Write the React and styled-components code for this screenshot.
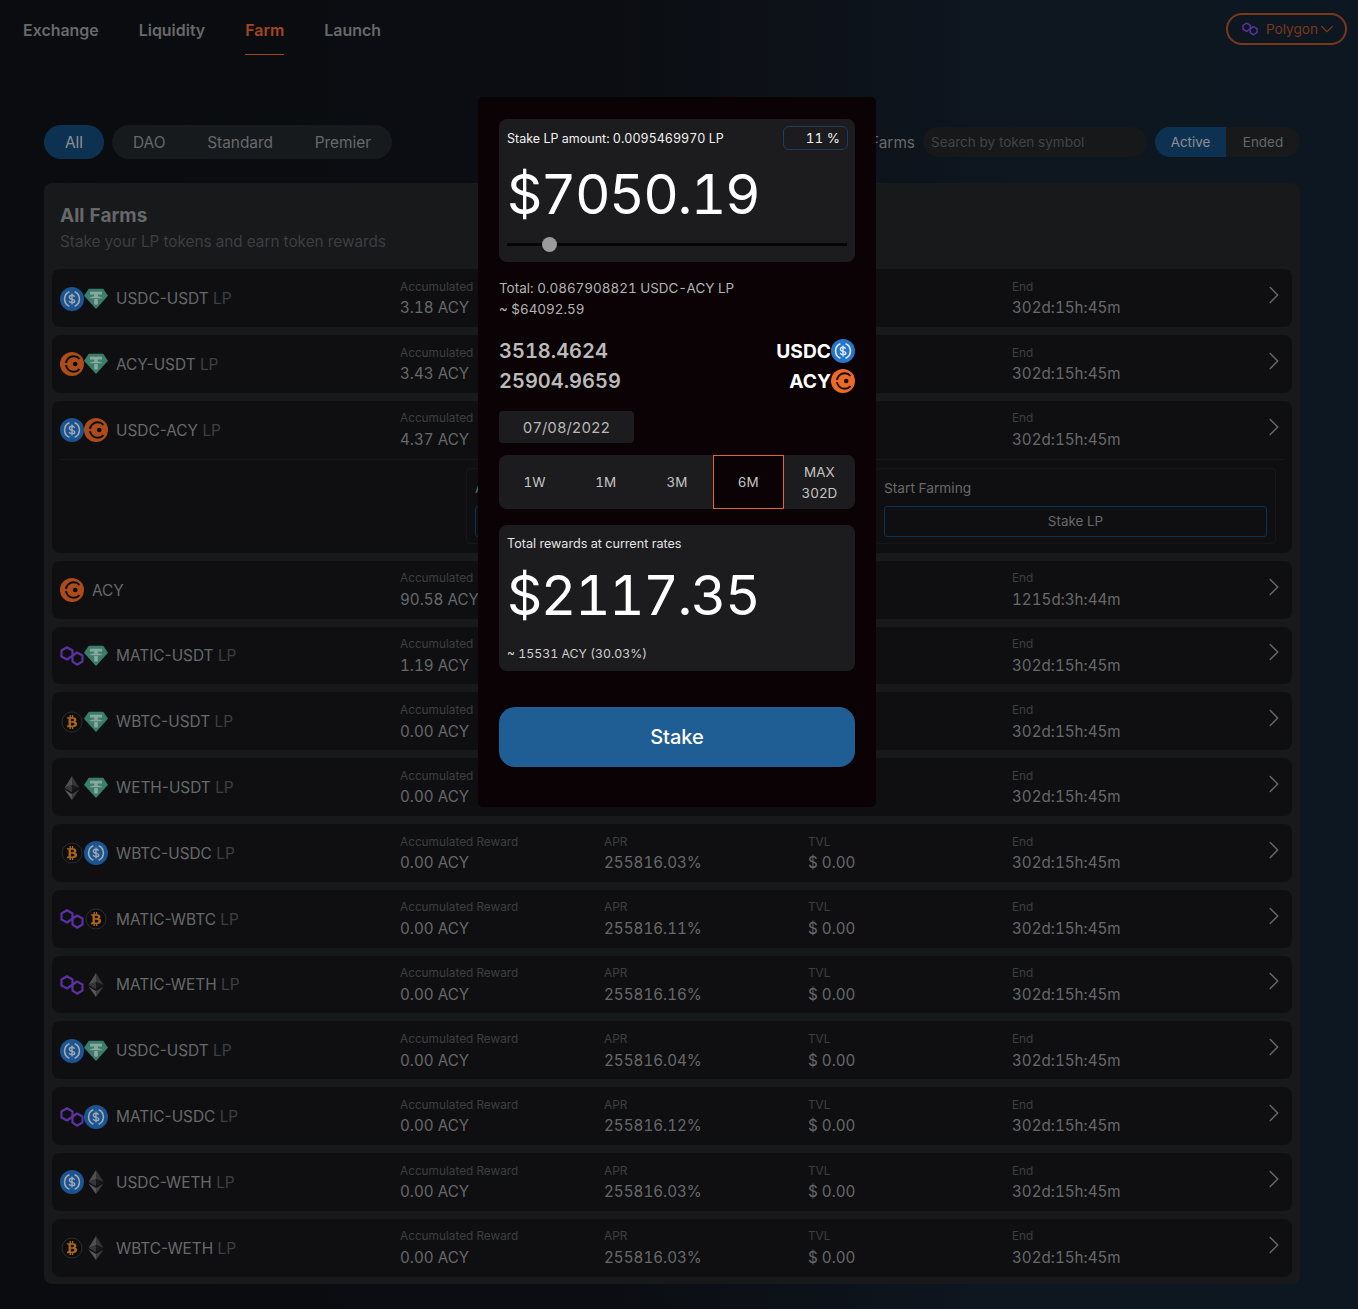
import React from "react";
import styled, { createGlobalStyle } from "styled-components";
import { ChevronDown, ChevronRight } from "lucide-react";
import { FaBtc } from "react-icons/fa";

const Global = createGlobalStyle`
  html, body { margin: 0; padding: 0; background: #0c0e12; }
  body { font-family: Inter, "Liberation Sans", sans-serif; font-variant-numeric: tabular-nums; }
  * { box-sizing: border-box; }
`;

const Page = styled.div`
  position: relative;
  width: 1358px;
  height: 1309px;
  overflow: hidden;
  background: linear-gradient(90deg, #0f1115 0%, #10131a 45%, #14202d 75%, #13202e 100%);
`;
const Nav = styled.header`
  display: flex;
  justify-content: space-between;
  align-items: flex-start;
  height: 125px;
  padding: 13px 11px 0 23px;
`;
const NavLinks = styled.nav`
  display: flex;
  gap: 40px;
`;
const NavLink = styled.a`
  display: block;
  height: 42px;
  padding-top: 8px;
  font-size: 15.95px;
  line-height: 20px;
  font-weight: 600;
  color: ${(p) => (p.$active ? "#e2602c" : "#8f9092")};
  border-bottom: ${(p) => (p.$active ? "1px solid #e2602c" : "none")};
`;
const Network = styled.button`
  display: flex;
  align-items: center;
  width: 121px;
  height: 32px;
  padding: 0 0 0 14px;
  border: 2px solid #a84e24;
  border-radius: 16px;
  background: transparent;
  font: 400 13.6px Inter, sans-serif;
  color: #a84e24;
  svg:first-child { margin-right: 8px; }
`;
const Filters = styled.div`
  display: flex;
  align-items: center;
  height: 34px;
  margin: 0 58px 24px 44px;
`;
const AllPill = styled.div`
  width: 60px;
  height: 34px;
  line-height: 35px;
  margin-right: 8px;
  border-radius: 17px;
  background: #134470;
  color: #c4c6c8;
  text-align: center;
  font-size: 15.4px;
`;
const PillGroup = styled.div`
  display: flex;
  justify-content: space-between;
  width: 280px;
  height: 34px;
  padding: 0 21px;
  border-radius: 17px;
  background: #212529;
  color: #8f9092;
  font-size: 15.4px;
  line-height: 35px;
`;
const FilterRight = styled.div`
  display: flex;
  align-items: center;
  height: 30px;
  margin-left: auto;
`;
const MyFarms = styled.span`
  margin-right: 8px;
  font-size: 15.4px;
  color: #8f9092;
`;
const Search = styled.input`
  width: 224px;
  height: 30px;
  margin-right: 8px;
  padding: 0 8px;
  border: none;
  border-radius: 15px;
  background: #202225;
  font: 400 13.5px Inter, sans-serif;
  &::placeholder { color: #5d5e60; opacity: 1; }
`;
const Toggle = styled.div`
  display: flex;
  height: 30px;
  border-radius: 15px;
  overflow: hidden;
  background: #212326;
`;
const ToggleItem = styled.div`
  width: ${(p) => (p.$active ? "71px" : "74px")};
  line-height: 30px;
  text-align: center;
  font-size: 13.44px;
  color: ${(p) => (p.$active ? "#c4c6c8" : "#8f9092")};
  background: ${(p) => (p.$active ? "#134470" : "transparent")};
`;
const Panel = styled.section`
  display: flex;
  flex-direction: column;
  gap: 8px;
  height: 1101px;
  margin: 0 58px 0 44px;
  padding: 19px 8px 8px;
  border-radius: 8px;
  background: #212326;
`;
const PanelHead = styled.div`
  height: 59.3px;
  padding: 0 8px;
  flex: none;
`;
const PanelTitle = styled.h2`
  margin: 0;
  font-size: 19px;
  line-height: 27px;
  font-weight: 700;
  color: #8f9092;
`;
const PanelSub = styled.p`
  margin: 1px 0 0;
  font-size: 15.3px;
  line-height: 24px;
  color: #55565a;
`;
const Row = styled.article`
  flex: none;
  min-height: 57.8px;
  padding: 0 8px;
  border-radius: 8px;
  background: #151618;
`;
const RowMain = styled.div`
  display: grid;
  grid-template-columns: 340px repeat(4, 204px) 1fr;
  align-items: center;
  height: 57.8px;
  padding-top: 0.8px;
`;
const NameCell = styled.div`
  display: flex;
  align-items: center;
  gap: 8px;
`;
const Icons = styled.div`
  display: flex;
  svg { display: block; }
`;
const Name = styled.span`
  font-size: 15.4px;
  font-variant-numeric: normal;
  color: #8f9092;
`;
const Lp = styled.span`
  color: #55565a;
`;
const Metric = styled.div`
  white-space: nowrap;
  visibility: ${(p) => (p.$covered ? "hidden" : "visible")};
`;
const MetricLabel = styled.div`
  font-size: 11.8px;
  line-height: 16px;
  color: #55565a;
`;
const MetricValue = styled.div`
  margin-top: 3.5px;
  font-size: 15.2px;
  line-height: 20px;
  color: #8f9092;
`;
const Arrow = styled.div`
  display: flex;
  justify-content: flex-end;
  margin: -7px -5px 0 0;
  color: #8f9092;
`;
const Expanded = styled.div`
  display: flex;
  justify-content: flex-end;
  gap: 8px;
  height: 94.2px;
  padding: 8px 8px 9px 0;
  border-top: 1px solid #1f2124;
`;
const ActionBox = styled.div`
  width: 401px;
  padding: 9px 8px 8px;
  border: 1px solid #1f2124;
  border-radius: 4px;
  color: #8f9092;
  font-size: 13.7px;
  line-height: 20px;
`;
const ActionButton = styled.div`
  height: 31px;
  margin-top: 8px;
  border: 1px solid #134470;
  border-radius: 3px;
  line-height: 29px;
  text-align: center;
  font-size: 13.44px;
  color: #8f9092;
`;

const Mask = styled.div`
  position: absolute;
  inset: 0;
  background: rgba(0, 0, 0, 0.28);
`;
const Modal = styled.aside`
  position: absolute;
  left: 478px;
  top: 97px;
  width: 398px;
  height: 710px;
  padding: 22px 21px;
  border-radius: 5px;
  background: #0a0204;
`;
const Card = styled.div`
  position: relative;
  border-radius: 8px;
  background: #1c1c1e;
  padding: 0 8px;
`;
const StakeCard = styled(Card)`
  height: 143px;
`;
const CardLabel = styled.div`
  display: flex;
  align-items: center;
  justify-content: space-between;
  height: 38px;
  font-size: 12.5px;
  color: #f2f2f2;
`;
const Percent = styled.div`
  width: 65px;
  height: 24px;
  margin: -1px -1px 0 0;
  padding-right: 7px;
  border: 1px solid #1c3c5c;
  border-radius: 6px;
  line-height: 22px;
  text-align: right;
  font-size: 13.44px;
  color: #eee;
`;
const BigAmount = styled.div`
  padding-top: 3px;
  font-size: 55px;
  line-height: 68px;
  letter-spacing: -1.5px;
  color: #fff;
  white-space: nowrap;
`;
const Track = styled.div`
  position: relative;
  height: 3px;
  margin-top: 15px;
  background: #050505;
`;
const Thumb = styled.div`
  position: absolute;
  top: -6px;
  width: 15px;
  height: 15px;
  border-radius: 50%;
  background: #9a9a9a;
`;
const Total = styled.div`
  margin-top: 16px;
  font-size: 13.44px;
  line-height: 21px;
  color: #b4b4b4;
`;
const TokenRow = styled.div`
  display: flex;
  justify-content: space-between;
  align-items: center;
  height: 30px;
  font-size: 20px;
  font-weight: 600;
  color: #bbbbbb;
`;
const TokenList = styled.div`
  margin-top: 16px;
`;
const TokenName = styled.div`
  display: flex;
  align-items: center;
  font-size: 19.2px;
  font-weight: 700;
  color: #fff;
`;
const DateBox = styled.div`
  width: 135px;
  height: 32px;
  margin-top: 15px;
  border-radius: 4px;
  background: #1c1c1e;
  text-align: center;
  line-height: 34px;
  font-size: 14.8px;
  color: #b8b8b8;
`;
const Durations = styled(Card)`
  display: grid;
  grid-template-columns: repeat(5, 1fr);
  height: 54px;
  margin-top: 12px;
  padding: 0;
`;
const Duration = styled.div`
  display: flex;
  align-items: center;
  justify-content: center;
  padding-top: 1px;
  text-align: center;
  font-size: 13.44px;
  line-height: 21px;
  color: #c4c4c4;
  border: 1px solid ${(p) => (p.$active ? "#e8622c" : "transparent")};
  background: ${(p) => (p.$active ? "#0a0204" : "transparent")};
`;
const RewardCard = styled(Card)`
  height: 146px;
  margin-top: 16px;
`;
const RewardLabel = styled.div`
  height: 36px;
  line-height: 38px;
  font-size: 12.6px;
  color: #e4e4e4;
`;
const RewardAmount = styled(BigAmount)`
  padding-top: 0;
`;
const RewardNote = styled.div`
  margin-top: 15px;
  font-size: 12.3px;
  line-height: 20px;
  color: #d0d0d0;
`;
const StakeButton = styled.button`
  display: block;
  width: 100%;
  height: 60px;
  margin-top: 36px;
  border: none;
  border-radius: 16px;
  background: #1f5e94;
  color: #fff;
  font: 500 20px Inter, sans-serif;
`;

const Usdc = ({ s = 24 }) => (
  <svg width={s} height={s} viewBox="0 0 24 24">
    <circle cx="12" cy="12" r="12" fill="#2775ca" />
    <path d="M9.4 4.8a7.8 7.8 0 0 0 0 14.4M14.6 4.8a7.8 7.8 0 0 1 0 14.4" fill="none" stroke="#fff" strokeOpacity=".85" strokeWidth="1.6" />
    <path d="M14.6 9.8c-.4-1-1.3-1.5-2.6-1.5-1.500 0-2.600.8-2.600 1.900 0 3 5.400 1.400 5.400 3.800 0 1.100-1.200 1.800-2.800 1.800-1.400 0-2.400-.6-2.800-1.700M12 6.600v10.800" fill="none" stroke="#fff" strokeOpacity=".85" strokeWidth="1.400" />
  </svg>
);
const Acy = ({ s = 24 }) => (
  <svg width={s} height={s} viewBox="0 0 24 24">
    <circle cx="12" cy="12" r="12" fill="#ee6a24" />
    <path d="M19.500 6.800A7.800 7.800 0 1 0 19.500 17.200" fill="none" stroke="#0e0e0e" strokeWidth="1.900" />
    <circle cx="15.200" cy="12" r="2.300" fill="#0e0e0e" />
    <rect x="3.500" y="10.900" width="9" height="2.200" fill="#ee6a24" />
  </svg>
);
const Usdt = ({ s = 24 }) => (
  <svg width={s} height={s} viewBox="0 0 24 24">
    <path d="M4.800 1.800h14.400L24 8.800 12 22 0 8.800z" fill="#50af95" />
    <path d="M6 4.800h12v2.800h-4.200v2c2.600.1 4.600.6 4.600 1.200s-2 1.100-4.600 1.200v5.500h-3.600V12c-2.600-.1-4.600-.6-4.600-1.200s2-1.100 4.600-1.200v-2H6z" fill="#c4e6db" />
    <path d="M5.600 10.900c1.500.5 3.900.7 6.400.7s4.900-.2 6.400-.7" fill="none" stroke="#50af95" strokeWidth=".8" />
  </svg>
);
const Matic = ({ s = 24 }) => (
  <svg width={s} height={s} viewBox="0 0 24 24" fill="none" stroke="#7c45e0" strokeWidth="2.200" strokeLinejoin="round">
    <path d="M7 15.500L1.500 12.500V6.500L7 3.300L12.500 6.500V17.500L17 20.700L22.500 17.500V11.500L17 8.500Z" />
  </svg>
);
const Eth = ({ s = 24 }) => (
  <svg width={s} height={s} viewBox="0 0 24 24">
    <path d="M12 0 4.500 12 12 9z" fill="#6f6f6f" />
    <path d="M12 0 19.500 12 12 9z" fill="#4a4a4a" />
    <path d="M4.500 12 12 16.300V9z" fill="#4c4c4c" />
    <path d="M19.500 12 12 16.300V9z" fill="#222" />
    <path d="M4.500 13.500 12 24v-6z" fill="#7a7a7a" />
    <path d="M19.500 13.500 12 24v-6z" fill="#555" />
  </svg>
);
const Btc = ({ s = 24 }) => (
  <svg width={s} height={s} viewBox="0 0 24 24">
    <circle cx="12" cy="12" r="10" fill="#111216" stroke="#4a4d5a" strokeWidth=".7" />
    <g transform="translate(5 5)"><FaBtc size={14} color="#f08c22" /></g>
  </svg>
);

const ICONS = { USDC: Usdc, USDT: Usdt, ACY: Acy, MATIC: Matic, WBTC: Btc, WETH: Eth };

const FARMS = [
  ["USDC", "USDT", "3.18", "", "302d:15h:45m"],
  ["ACY", "USDT", "3.43", "", "302d:15h:45m"],
  ["USDC", "ACY", "4.37", "", "302d:15h:45m", true],
  ["ACY", null, "90.58", "", "1215d:3h:44m"],
  ["MATIC", "USDT", "1.19", "", "302d:15h:45m"],
  ["WBTC", "USDT", "0.00", "", "302d:15h:45m"],
  ["WETH", "USDT", "0.00", "", "302d:15h:45m"],
  ["WBTC", "USDC", "0.00", "255816.03%", "302d:15h:45m"],
  ["MATIC", "WBTC", "0.00", "255816.11%", "302d:15h:45m"],
  ["MATIC", "WETH", "0.00", "255816.16%", "302d:15h:45m"],
  ["USDC", "USDT", "0.00", "255816.04%", "302d:15h:45m"],
  ["MATIC", "USDC", "0.00", "255816.12%", "302d:15h:45m"],
  ["USDC", "WETH", "0.00", "255816.03%", "302d:15h:45m"],
  ["WBTC", "WETH", "0.00", "255816.03%", "302d:15h:45m"],
];

function FarmRow({ farm }) {
  const [a, b, reward, apr, end, open] = farm;
  const A = ICONS[a];
  const B = b && ICONS[b];
  const covered = !apr;
  return (
    <Row>
      <RowMain>
        <NameCell>
          <Icons>
            <A />
            {B && <B />}
          </Icons>
          {b ? (
            <Name>
              {a}-{b} <Lp>LP</Lp>
            </Name>
          ) : (
            <Name>{a}</Name>
          )}
        </NameCell>
        <Metric>
          <MetricLabel>{covered ? "Accumulated" : "Accumulated Reward"}</MetricLabel>
          <MetricValue>{reward} ACY</MetricValue>
        </Metric>
        <Metric $covered={covered}>
          <MetricLabel>APR</MetricLabel>
          <MetricValue>{apr}</MetricValue>
        </Metric>
        <Metric $covered={covered}>
          <MetricLabel>TVL</MetricLabel>
          <MetricValue>$ 0.00</MetricValue>
        </Metric>
        <Metric>
          <MetricLabel>End</MetricLabel>
          <MetricValue>{end}</MetricValue>
        </Metric>
        <Arrow>
          <ChevronRight size={30} strokeWidth={1.2} />
        </Arrow>
      </RowMain>
      {open && (
        <Expanded>
          <ActionBox>
            A
            <ActionButton />
          </ActionBox>
          <ActionBox>
            Start Farming
            <ActionButton>Stake LP</ActionButton>
          </ActionBox>
        </Expanded>
      )}
    </Row>
  );
}

export default function App() {
  return (
    <Page>
      <Global />
      <Nav>
        <NavLinks>
          <NavLink>Exchange</NavLink>
          <NavLink>Liquidity</NavLink>
          <NavLink $active>Farm</NavLink>
          <NavLink>Launch</NavLink>
        </NavLinks>
        <Network>
          <Matic s={16} />
          Polygon
          <ChevronDown size={22} strokeWidth={1.2} style={{ marginLeft: -2 }} />
        </Network>
      </Nav>
      <Filters>
        <AllPill>All</AllPill>
        <PillGroup>
          <span>DAO</span>
          <span>Standard</span>
          <span>Premier</span>
        </PillGroup>
        <FilterRight>
          <MyFarms>My Farms</MyFarms>
          <Search placeholder="Search by token symbol" />
          <Toggle>
            <ToggleItem $active>Active</ToggleItem>
            <ToggleItem>Ended</ToggleItem>
          </Toggle>
        </FilterRight>
      </Filters>
      <Panel>
        <PanelHead>
          <PanelTitle>All Farms</PanelTitle>
          <PanelSub>Stake your LP tokens and earn token rewards</PanelSub>
        </PanelHead>
        {FARMS.map((f, i) => (
          <FarmRow key={i} farm={f} />
        ))}
      </Panel>
      <Mask />
      <Modal>
        <StakeCard>
          <CardLabel>
            <span>Stake LP amount: 0.0095469970 LP</span>
            <Percent>11 %</Percent>
          </CardLabel>
          <BigAmount>$7050.19</BigAmount>
          <Track>
            <Thumb style={{ left: `${(35.5 / 341) * 100}%` }} />
          </Track>
        </StakeCard>
        <Total>
          Total: 0.0867908821 USDC-ACY LP
          <br />~ $64092.59
        </Total>
        <TokenList>
          <TokenRow>
            <span>3518.4624</span>
            <TokenName>
              USDC
              <Usdc />
            </TokenName>
          </TokenRow>
          <TokenRow>
            <span>25904.9659</span>
            <TokenName>
              ACY
              <Acy />
            </TokenName>
          </TokenRow>
        </TokenList>
        <DateBox>07/08/2022</DateBox>
        <Durations>
          <Duration>1W</Duration>
          <Duration>1M</Duration>
          <Duration>3M</Duration>
          <Duration $active>6M</Duration>
          <Duration>
            MAX
            <br />
            302D
          </Duration>
        </Durations>
        <RewardCard>
          <RewardLabel>Total rewards at current rates</RewardLabel>
          <RewardAmount>$2117.35</RewardAmount>
          <RewardNote>~ 15531 ACY (30.03%)</RewardNote>
        </RewardCard>
        <StakeButton>Stake</StakeButton>
      </Modal>
    </Page>
  );
}
